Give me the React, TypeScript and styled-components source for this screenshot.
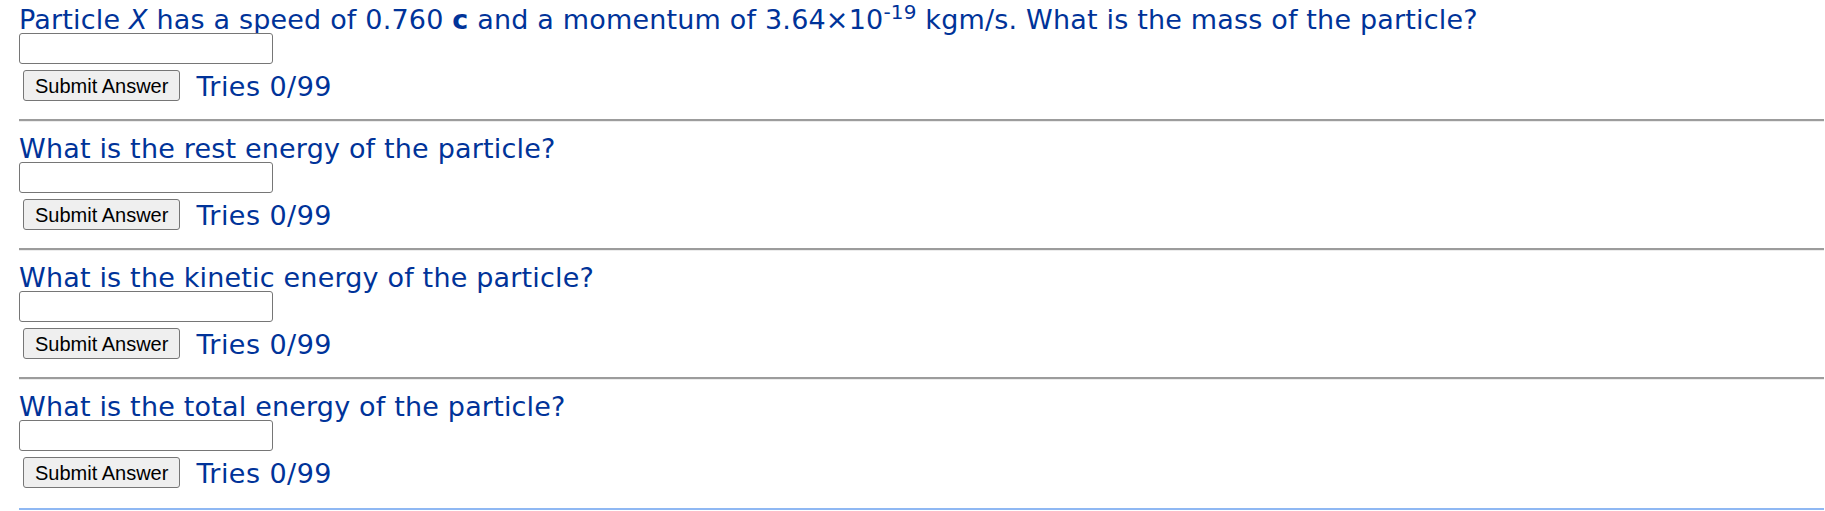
import React from 'react';
import styled, { createGlobalStyle } from 'styled-components';

const GlobalStyle = createGlobalStyle`
  html, body {
    margin: 0;
    padding: 0;
    background: #ffffff;
  }
  body {
    font-family: "DejaVu Sans", Verdana, sans-serif;
    overflow: hidden;
  }
`;

const Page = styled.div`
  padding: 6px 1px 0 19px;
  display: flex;
  flex-direction: column;
`;

const Part = styled.section`
  display: flex;
  flex-direction: column;
  align-items: flex-start;
`;

const Question = styled.div`
  font-size: 27px;
  line-height: 27px;
  letter-spacing: 0.18px;
  color: #003399;
  white-space: nowrap;

  i {
    font-style: italic;
  }

  b {
    font-weight: bold;
  }

  sup {
    font-size: 20px;
    line-height: 0;
    vertical-align: 10px;
  }
`;

const AnswerInput = styled.input`
  box-sizing: border-box;
  width: 254px;
  height: 31px;
  margin: 0;
  padding: 2px 4px;
  border: 1px solid #767676;
  border-radius: 3px;
  background: #ffffff;
  font-family: "Liberation Sans", Arial, sans-serif;
  font-size: 20px;
`;

const ActionRow = styled.div`
  display: flex;
  align-items: center;
  gap: 16px;
  margin: 6px 0 0 4px;
`;

const SubmitButton = styled.button`
  box-sizing: border-box;
  height: 31px;
  padding: 0 11px;
  margin: 0;
  border: 1px solid #767676;
  border-radius: 3px;
  background: #efefef;
  color: #000000;
  font-family: "Liberation Sans", Arial, sans-serif;
  font-size: 20px;
  line-height: 1;
`;

const Tries = styled.span`
  font-size: 27px;
  line-height: 27px;
  letter-spacing: 0.45px;
  color: #003399;
  margin-top: 2px;
`;

const Rule = styled.hr<{ $last?: boolean }>`
  box-sizing: border-box;
  width: 100%;
  height: ${({ $last }) => ($last ? '2px' : '3px')};
  margin: ${({ $last }) => ($last ? '20px 0 0 0' : '18px 0 13px 0')};
  border: none;
  border-top: 2px solid ${({ $last }) => ($last ? '#8fb8f3' : '#9c9c9c')};
  border-bottom: ${({ $last }) => ($last ? 'none' : '1px solid #ececec')};
`;

interface PartData {
  id: number;
  text: React.ReactNode;
}

const parts: PartData[] = [
  {
    id: 1,
    text: (
      <>
        Particle <i>X</i> has a speed of 0.760 <b>c</b> and a momentum of 3.64×10
        <sup>-19</sup> kgm/s. What is the mass of the particle?
      </>
    ),
  },
  { id: 2, text: 'What is the rest energy of the particle?' },
  { id: 3, text: 'What is the kinetic energy of the particle?' },
  { id: 4, text: 'What is the total energy of the particle?' },
];

const App: React.FC = () => {
  return (
    <>
      <GlobalStyle />
      <Page>
        {parts.map((part, index) => (
          <React.Fragment key={part.id}>
            <Part>
              <Question>{part.text}</Question>
              <AnswerInput type="text" />
              <ActionRow>
                <SubmitButton type="button">Submit Answer</SubmitButton>
                <Tries>Tries 0/99</Tries>
              </ActionRow>
            </Part>
            <Rule $last={index === parts.length - 1} />
          </React.Fragment>
        ))}
      </Page>
    </>
  );
};

export default App;
